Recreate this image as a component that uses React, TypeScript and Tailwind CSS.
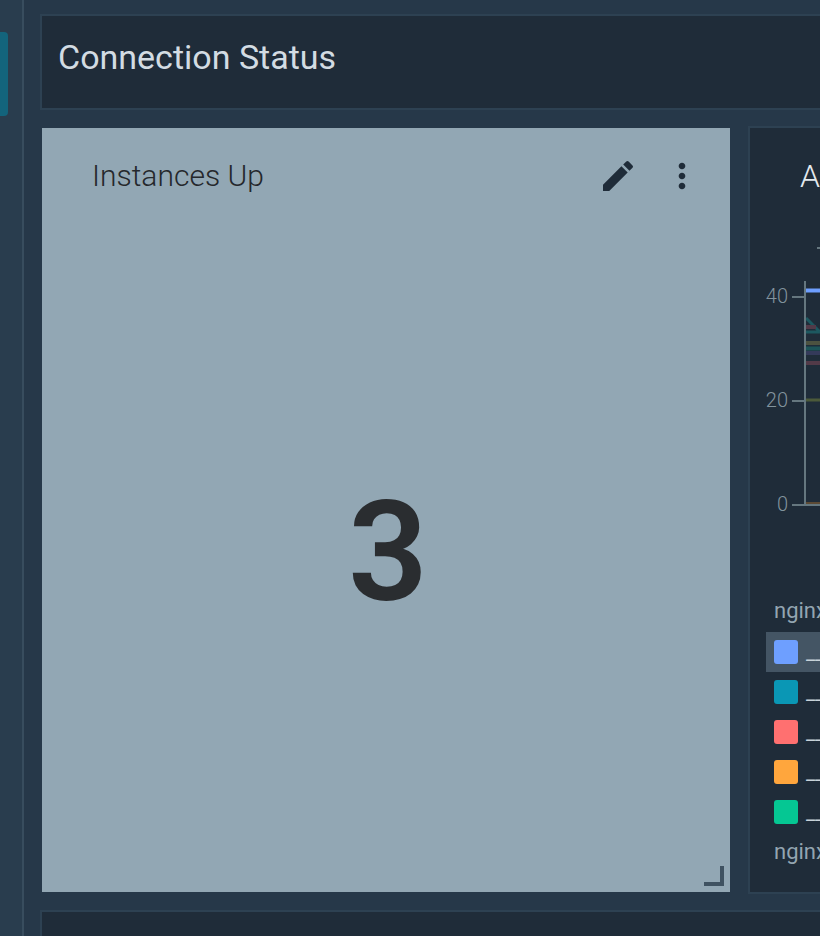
import React from 'react';

const LEGEND = [
  { color: 'bg-[#6e9fff]', active: true },
  { color: 'bg-[#0a97b5]', active: false },
  { color: 'bg-[#ff7070]', active: false },
  { color: 'bg-[#ffa63d]', active: false },
  { color: 'bg-[#05c793]', active: false },
];

function EditIcon() {
  return (
    <svg width="40" height="40" viewBox="0 0 24 24" fill="#1f2c39">
      <path d="M3 17.25V21h3.75L17.81 9.94l-3.75-3.75L3 17.25zM20.71 7.04a1 1 0 0 0 0-1.41l-2.34-2.34a1 1 0 0 0-1.41 0l-1.83 1.83 3.75 3.75 1.83-1.83z" />
    </svg>
  );
}

function MoreIcon() {
  return (
    <svg width="40" height="40" viewBox="0 0 24 24" fill="#1f2c39">
      <path d="M12 8c1.1 0 2-.9 2-2s-.9-2-2-2-2 .9-2 2 .9 2 2 2zm0 2c-1.1 0-2 .9-2 2s.9 2 2 2 2-.9 2-2-.9-2-2-2zm0 6c-1.1 0-2 .9-2 2s.9 2 2 2 2-.9 2-2-.9-2-2-2z" />
    </svg>
  );
}

function Chart() {
  return (
    <svg width="70" height="300" viewBox="0 0 70 300" className="block">
      <g fill="none" strokeWidth="4">
        <path d="M56 59.5H70" stroke="#6e9fff" />
        <path d="M56 87L70 101H56" stroke="#1d5860" strokeWidth="3" />
        <path d="M56 96H66" stroke="#523a48" />
        <path d="M56 112H70" stroke="#4c5240" />
        <path d="M56 117.5H70" stroke="#1d5458" />
        <path d="M56 122H70" stroke="#343a5a" />
        <path d="M56 132H70" stroke="#523a48" />
        <path d="M56 169H70" stroke="#4c5a3a" strokeWidth="3" />
        <path d="M56 272H70" stroke="#5c4a35" strokeWidth="2" />
      </g>
      <g stroke="#65777f" strokeWidth="2" fill="none">
        <path d="M55 50V274H70" />
        <path d="M42 66H55M42 170H55M42 274H55" />
        <path d="M67 17H70" />
      </g>
      <g fill="#82939d" fontSize="20" fontWeight="300" fontFamily="Roboto, sans-serif" textAnchor="end">
        <text x="38" y="72">40</text>
        <text x="38" y="176">20</text>
        <text x="38" y="280">0</text>
      </g>
    </svg>
  );
}

export default function App() {
  return (
    <div className="flex h-[936px] w-[820px] overflow-hidden bg-[#263849] font-['Roboto',sans-serif]">
      <aside className="w-[24px] shrink-0 border-r-2 border-[#384d5e] bg-[#293d4e] pt-[32px]">
        <div className="h-[84px] w-[8px] rounded-r-[4px] bg-[#13647c]" />
      </aside>
      <main className="flex min-w-0 flex-1 flex-col gap-[16px] overflow-hidden pl-[16px] pt-[14px]">
        <header className="flex h-[96px] w-[900px] shrink-0 items-center border-2 border-[#2d4152] bg-[#1f2c39] pb-[10px] pl-[16px]">
          <h1 className="text-[34px] font-normal text-[#d3dce3]">Connection Status</h1>
        </header>
        <div className="flex h-[768px] shrink-0 gap-[16px]">
          <section className="relative flex w-[692px] shrink-0 flex-col border-2 border-[#263849] bg-[#92a7b4]">
            <div className="flex h-[96px] items-center pl-[50px] pr-[28px]">
              <h2 className="flex-1 pb-[1px] text-[30px] font-light text-[#25282c]">Instances Up</h2>
              <div className="mr-[24px]"><EditIcon /></div>
              <MoreIcon />
            </div>
            <div className="flex flex-1 items-center justify-center pb-[12px] pl-[4px]">
              <span className="text-[140px] font-semibold leading-none text-[#2a2d30]">3</span>
            </div>
            <div className="absolute bottom-[6px] right-[6px] h-[20px] w-[20px] border-b-[4px] border-r-[4px] border-[#3f5261]" />
          </section>
          <section className="w-[400px] shrink-0 border-2 border-[#2d4152] bg-[#1f2c39]">
            <div className="h-[103px] pl-[50px] pt-[28px] text-[32px] font-light leading-[40px] text-[#e3e9ee]">Active Connections</div>
            <Chart />
            <div className="pl-[24px] pt-[65px] text-[22px] leading-[30px] text-[#93a5b1]">nginx</div>
            <ul className="ml-[16px] mt-[6px]">
              {LEGEND.map((item, i) => (
                <li key={i} className={`flex h-[40px] items-center gap-[8px] pl-[8px] ${item.active ? 'bg-[#445564]' : ''}`}>
                  <span className={`h-[24px] w-[24px] rounded-[3px] ${item.color}`} />
                  <span className="text-[20px] leading-[24px] text-[#c9d3da]">______</span>
                </li>
              ))}
            </ul>
            <div className="pl-[24px] pt-[5px] text-[22px] leading-[30px] text-[#93a5b1]">nginx</div>
          </section>
        </div>
        <div className="h-[60px] w-[900px] shrink-0 border-2 border-[#2d4152] bg-[#1f2c39]" />
      </main>
    </div>
  );
}
